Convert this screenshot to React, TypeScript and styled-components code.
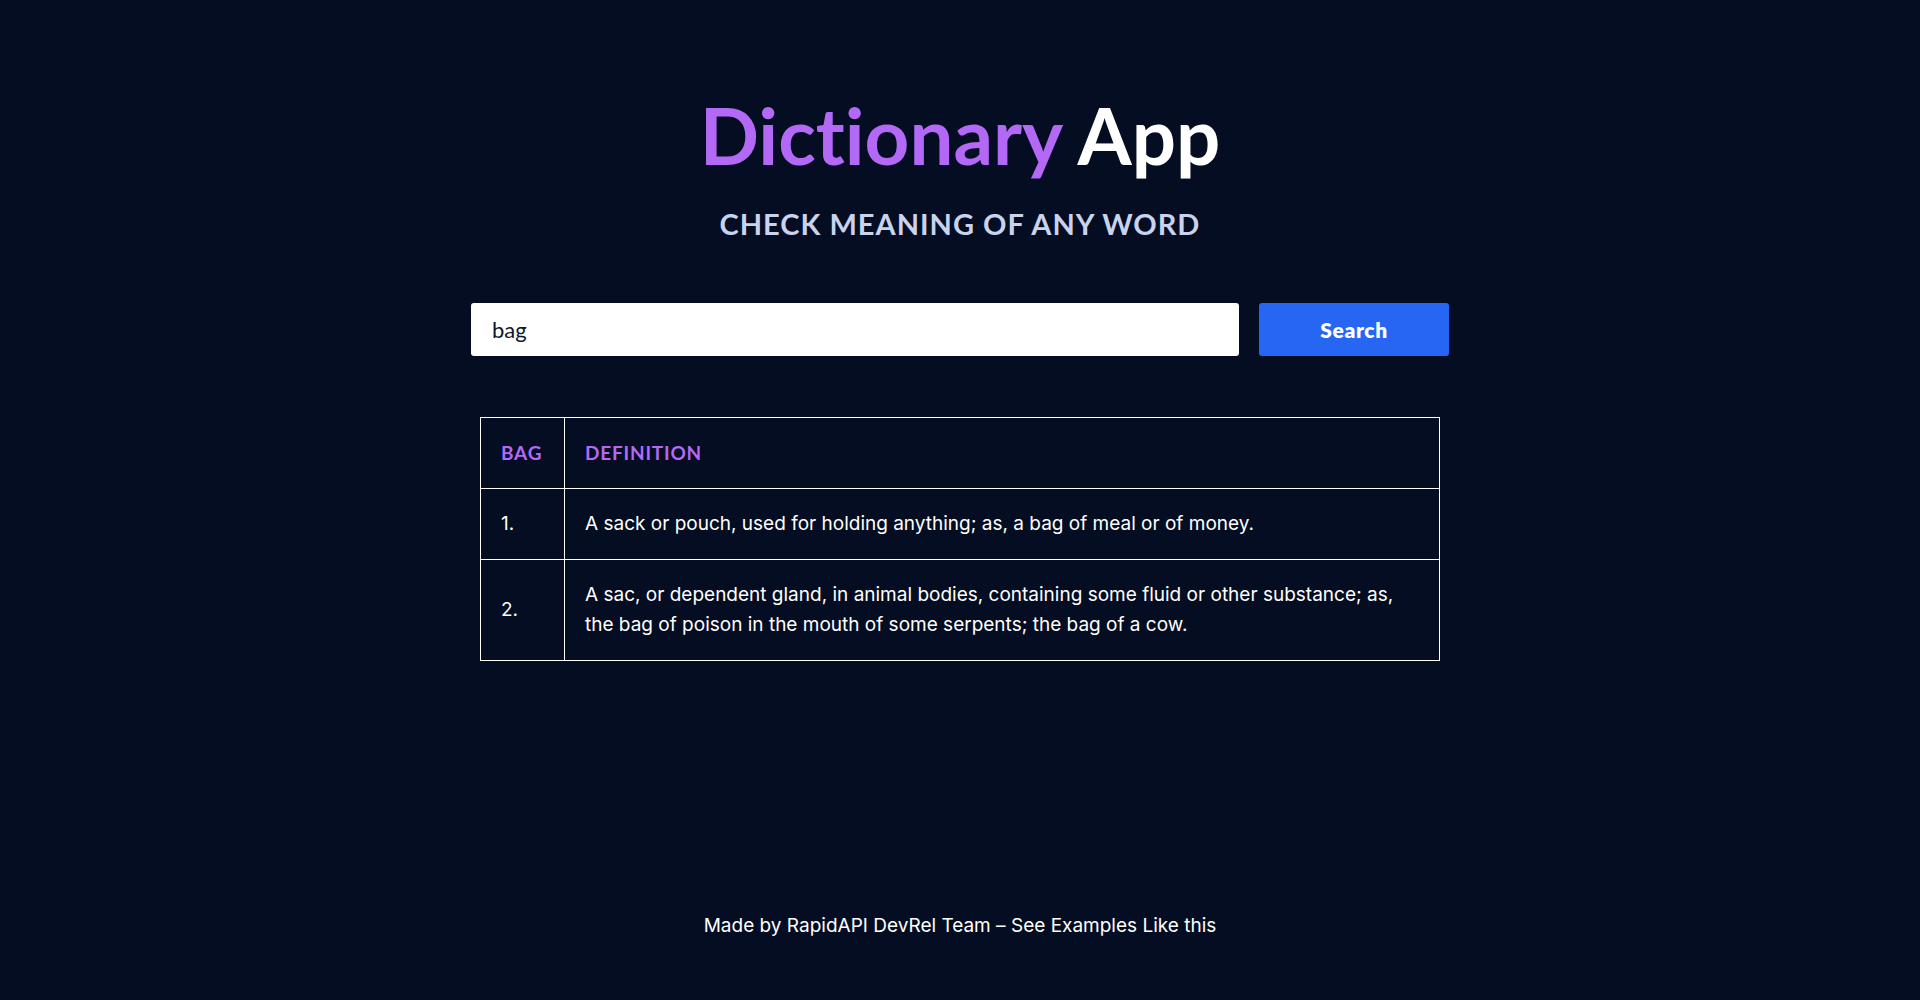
import React, { useState } from 'react';
import styled, { createGlobalStyle } from 'styled-components';

const palette = {
  bg: '#040d21',
  purple: '#b369f5',
  blue: '#2666f3',
  subtitle: '#c9d3ee',
  ink: '#0f172a',
  white: '#ffffff',
};

const displayFont = `Lato, "Open Sans", "Liberation Sans", sans-serif`;
const bodyFont = `Inter, Roboto, "Liberation Sans", sans-serif`;

const GlobalStyle = createGlobalStyle`
  * {
    box-sizing: border-box;
  }
  body {
    margin: 0;
    background: ${palette.bg};
    color: ${palette.white};
    font-family: ${bodyFont};
    font-variant-ligatures: none;
  }
`;

type Definition = { id: number; text: string };

const definitions: Definition[] = [
  {
    id: 1,
    text: 'A sack or pouch, used for holding anything; as, a bag of meal or of money.',
  },
  {
    id: 2,
    text: 'A sac, or dependent gland, in animal bodies, containing some fluid or other substance; as, the bag of poison in the mouth of some serpents; the bag of a cow.',
  },
];

function App() {
  const [word, setWord] = useState('bag');
  const onSubmit = (e: React.FormEvent) => {
    e.preventDefault();
  };

  return (
    <>
      <GlobalStyle />
      <Page>
        <Main>
          <Title>
            <span className="accent">Dictionary</span> App
          </Title>
          <Subtitle>Check meaning of any word</Subtitle>
          <SearchForm onSubmit={onSubmit}>
            <SearchInput value={word} onChange={(e) => setWord(e.target.value)} />
            <SearchButton type="submit">Search</SearchButton>
          </SearchForm>
          <Table>
            <thead>
              <tr>
                <HeadCell $narrow>bag</HeadCell>
                <HeadCell>Definition</HeadCell>
              </tr>
            </thead>
            <tbody>
              {definitions.map((d) => (
                <tr key={d.id}>
                  <Cell>{d.id}.</Cell>
                  <Cell>{d.text}</Cell>
                </tr>
              ))}
            </tbody>
          </Table>
        </Main>
        <Footer>Made by RapidAPI DevRel Team – See Examples Like this</Footer>
      </Page>
    </>
  );
}

const Page = styled.div`
  min-height: 100vh;
  display: flex;
  flex-direction: column;
  align-items: center;
`;

const Main = styled.main`
  flex: 1;
  display: flex;
  flex-direction: column;
  align-items: center;
  padding-top: 89px;
`;

const Title = styled.h1`
  margin: 0;
  font-family: ${displayFont};
  font-size: 78px;
  font-weight: 700;
  line-height: 1.2;
  color: ${palette.white};
  .accent {
    color: ${palette.purple};
  }
`;

const Subtitle = styled.h2`
  margin: 24px 0 0;
  font-family: ${displayFont};
  font-size: 29px;
  font-weight: 700;
  line-height: 1.2;
  letter-spacing: 1px;
  text-transform: uppercase;
  color: ${palette.subtitle};
`;

const SearchForm = styled.form`
  display: flex;
  gap: 20px;
  width: 978px;
  margin-top: 62px;
`;

const SearchInput = styled.input`
  flex: 1;
  height: 53px;
  padding: 0 21px;
  border: none;
  border-radius: 3px;
  background: ${palette.white};
  font-family: ${displayFont};
  font-size: 22px;
  color: ${palette.ink};
  outline: none;
`;

const SearchButton = styled.button`
  width: 190px;
  height: 53px;
  border: none;
  border-radius: 3px;
  background: ${palette.blue};
  color: ${palette.white};
  font-family: ${displayFont};
  font-size: 21px;
  font-weight: 800;
  letter-spacing: 0.6px;
  cursor: pointer;
`;

const Table = styled.table`
  width: 960px;
  margin-top: 61px;
  border-collapse: collapse;
  table-layout: fixed;
  border: 1px solid ${palette.white};
`;

const HeadCell = styled.th<{ $narrow?: boolean }>`
  width: ${(p) => (p.$narrow ? '84px' : 'auto')};
  padding: 20px;
  border: 1px solid ${palette.white};
  text-align: left;
  font-family: ${displayFont};
  font-size: 19px;
  font-weight: 700;
  line-height: 30px;
  letter-spacing: 0.8px;
  text-transform: uppercase;
  color: ${palette.purple};
`;

const Cell = styled.td`
  padding: 20px;
  border: 1px solid ${palette.white};
  font-size: 19px;
  line-height: 30px;
  vertical-align: middle;
  color: ${palette.white};
`;

const Footer = styled.footer`
  padding-bottom: 61px;
  font-size: 19px;
  line-height: 27px;
  color: ${palette.white};
`;

export default App;
